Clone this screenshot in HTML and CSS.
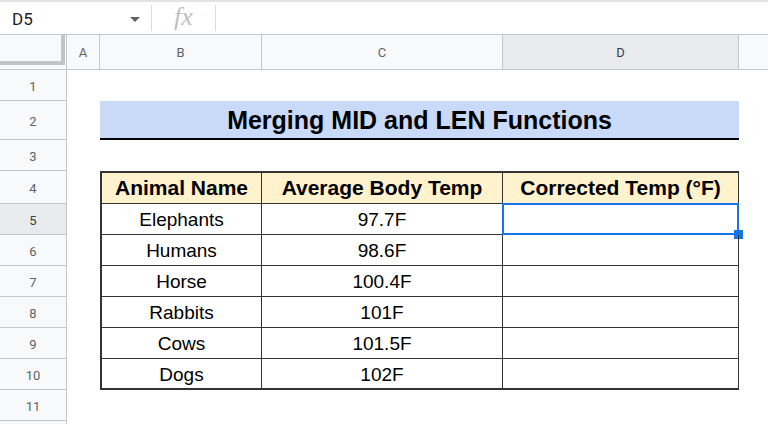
FILE: index.html
```html
<!DOCTYPE html>
<html>
<head>
<meta charset="utf-8">
<link rel="stylesheet" href="styles.css">
</head>
<body>
<div class="toolbar">
  <div class="namebox"><span class="ref">D5</span><span class="caret"></span></div>
  <div class="sep"></div>
  <div class="fx">fx</div>
  <div class="sep"></div>
  <div class="formula"></div>
</div>
<div class="sheet">
  <div class="corner"><div class="freeze"></div></div>
  <div class="ch">A</div>
  <div class="ch">B</div>
  <div class="ch">C</div>
  <div class="ch ch-sel">D</div>
  <div class="ch ch-last"></div>

  <div class="rh">1</div><div></div><div></div><div></div><div></div><div></div>

  <div class="rh">2</div><div></div>
  <div class="title">Merging MID and LEN Functions</div>
  <div></div>

  <div class="rh">3</div><div></div><div></div><div></div><div></div><div></div>

  <div class="rh">4</div><div></div>
  <div class="cell head first top">Animal Name</div>
  <div class="cell head top">Average Body Temp</div>
  <div class="cell head top">Corrected Temp (°F)</div>
  <div></div>

  <div class="rh rh-sel">5</div><div></div>
  <div class="cell first">Elephants</div>
  <div class="cell">97.7F</div>
  <div class="cell sel"><div class="selbox"></div><div class="handle"></div></div>
  <div></div>

  <div class="rh">6</div><div></div>
  <div class="cell first">Humans</div>
  <div class="cell">98.6F</div>
  <div class="cell"></div>
  <div></div>

  <div class="rh">7</div><div></div>
  <div class="cell first">Horse</div>
  <div class="cell">100.4F</div>
  <div class="cell"></div>
  <div></div>

  <div class="rh">8</div><div></div>
  <div class="cell first">Rabbits</div>
  <div class="cell">101F</div>
  <div class="cell"></div>
  <div></div>

  <div class="rh">9</div><div></div>
  <div class="cell first">Cows</div>
  <div class="cell">101.5F</div>
  <div class="cell"></div>
  <div></div>

  <div class="rh">10</div><div></div>
  <div class="cell first last">Dogs</div>
  <div class="cell last">102F</div>
  <div class="cell last"></div>
  <div></div>

  <div class="rh">11</div><div></div><div></div><div></div><div></div><div></div>
  <div class="rh"></div><div></div><div></div><div></div><div></div><div></div>
</div>
</body>
</html>
```
FILE: styles.css
```css
* { box-sizing: border-box; }
html, body { margin: 0; padding: 0; background: #fff; }
body { width: 768px; height: 424px; overflow: hidden; font-family: "Liberation Sans", Arial, sans-serif; }

.toolbar {
  height: 35px;
  display: flex;
  align-items: center;
  border-top: 2px solid #e3e3e3;
  border-bottom: 1px solid #c7c7c7;
}
.namebox {
  width: 151px;
  height: 100%;
  display: flex;
  align-items: center;
  padding-left: 12px;
  padding-right: 11px;
}
.ref {
  flex: 1;
  font-family: Roboto, "Liberation Sans", sans-serif;
  font-size: 17px;
  color: #202124;
  padding-top: 1px;
}
.caret {
  width: 0; height: 0;
  border-left: 5px solid transparent;
  border-right: 5px solid transparent;
  border-top: 5px solid #5f6368;
  margin-top: 2px;
}
.sep { width: 1px; height: 26px; background: #dadce0; }
.fx {
  width: 63px;
  text-align: center;
  font-family: "Liberation Serif", serif;
  font-style: italic;
  font-size: 26px;
  color: #c0c0c0;
  line-height: 1;
  padding-bottom: 3px;
}
.formula { flex: 1; }

.sheet {
  display: grid;
  grid-template-columns: 67px 33px 162px 241px 236px 29px;
  grid-template-rows: 35px 31px 39px 31px 33px repeat(7, 31px) 20px;
}
.corner {
  background: #f8f9fa;
  border-right: 1px solid #c7c7c7;
  border-bottom: 1px solid #c7c7c7;
}
.freeze {
  width: 65px;
  height: 30px;
  border-right: 4px solid #c4c4c4;
  border-bottom: 4px solid #c4c4c4;
}
.ch {
  background: #f8f9fa;
  border-right: 1px solid #c7c7c7;
  border-bottom: 1px solid #c7c7c7;
  display: flex;
  align-items: center;
  justify-content: center;
  font-family: Roboto, "Liberation Sans", sans-serif;
  font-size: 13px;
  color: #5f6368;
  padding-top: 1px;
}
.ch-sel { background: #e8eaed; color: #3c4043; }
.ch-last { border-right: none; }
.rh {
  background: #f8f9fa;
  border-right: 1px solid #c7c7c7;
  border-bottom: 1px solid #c7c7c7;
  display: flex;
  align-items: center;
  justify-content: center;
  font-family: Roboto, "Liberation Sans", sans-serif;
  font-size: 13px;
  color: #5f6368;
  padding-top: 2px;
}
.rh-sel { background: #e8eaed; color: #3c4043; }

.title {
  grid-column: span 3;
  background: #c9daf8;
  border-bottom: 2px solid #000;
  display: flex;
  align-items: center;
  justify-content: center;
  font-weight: bold;
  font-size: 25px;
  color: #000;
  padding-top: 1px;
}

.cell {
  position: relative;
  border-right: 1px solid #333;
  border-bottom: 1px solid #333;
  display: flex;
  align-items: center;
  justify-content: center;
  font-size: 19px;
  color: #000;
  padding-top: 2px;
}
.cell.first { border-left: 2px solid #333; }
.cell.top { border-top: 2px solid #333; }
.cell.last { border-bottom: 2px solid #333; }
.cell:nth-child(6n+5) { border-right: 2px solid #333; }
.head {
  background: #fff2cc;
  font-weight: bold;
  font-size: 21px;
  padding-top: 0;
}
.selbox {
  position: absolute;
  left: -1px; top: -1px; right: -1px; bottom: -1px;
  border: 2px solid #1a73e8;
}
.handle {
  position: absolute;
  right: -5px;
  bottom: -5px;
  width: 9px;
  height: 9px;
  background: #1a73e8;
}
```
